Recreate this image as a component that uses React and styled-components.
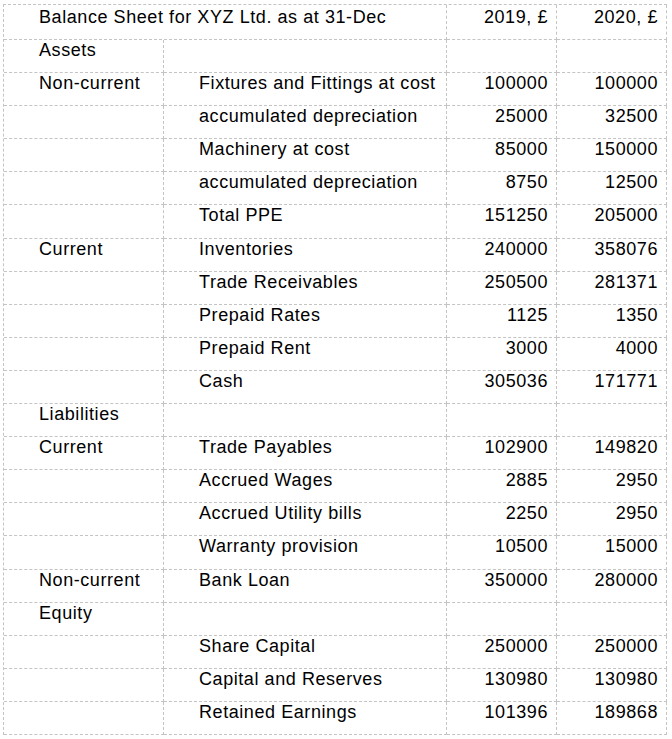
import React from "react";
import styled, { createGlobalStyle } from "styled-components";

const GlobalStyle = createGlobalStyle`
  html, body {
    margin: 0;
    padding: 0;
    background: #ffffff;
  }
  body {
    font-family: "Liberation Sans", Arial, sans-serif;
    color: #000000;
  }
`;

const LINE = "1px dashed #c4c4c4";

const Sheet = styled.div`
  display: grid;
  grid-template-columns: 160px 283px 110px 110px;
  grid-template-rows: 35px;
  grid-auto-rows: 33.1px;
  margin: 4px 0 0 3px;
  width: max-content;
  border-top: ${LINE};
  border-left: ${LINE};
`;

const Cell = styled.div`
  box-sizing: border-box;
  border-right: ${LINE};
  border-bottom: ${LINE};
  font-size: 18px;
  line-height: 20px;
  letter-spacing: 0.57px;
  padding: ${(p) => (p.$title ? "2px" : "0")} ${(p) => (p.$num ? "8px" : "0")} 0
    ${(p) => (p.$num ? "0" : "35px")};
  text-align: ${(p) => (p.$num ? "right" : "left")};
  grid-column: ${(p) => (p.$span ? `span ${p.$span}` : "auto")};
  white-space: nowrap;
`;

const rows = [
  ["Assets", "", "", ""],
  ["Non-current", "Fixtures and Fittings at cost", "100000", "100000"],
  ["", "accumulated depreciation", "25000", "32500"],
  ["", "Machinery at cost", "85000", "150000"],
  ["", "accumulated depreciation", "8750", "12500"],
  ["", "Total PPE", "151250", "205000"],
  ["Current", "Inventories", "240000", "358076"],
  ["", "Trade Receivables", "250500", "281371"],
  ["", "Prepaid Rates", "1125", "1350"],
  ["", "Prepaid Rent", "3000", "4000"],
  ["", "Cash", "305036", "171771"],
  ["Liabilities", "", "", ""],
  ["Current", "Trade Payables", "102900", "149820"],
  ["", "Accrued Wages", "2885", "2950"],
  ["", "Accrued Utility bills", "2250", "2950"],
  ["", "Warranty provision", "10500", "15000"],
  ["Non-current", "Bank Loan", "350000", "280000"],
  ["Equity", "", "", ""],
  ["", "Share Capital", "250000", "250000"],
  ["", "Capital and Reserves", "130980", "130980"],
  ["", "Retained Earnings", "101396", "189868"],
];

const App = () => {
  return (
    <>
      <GlobalStyle />
      <Sheet>
        <Cell $title $span={2}>
          Balance Sheet for XYZ Ltd. as at 31-Dec
        </Cell>
        <Cell $title $num>
          2019, £
        </Cell>
        <Cell $title $num>
          2020, £
        </Cell>
        {rows.map((row, index) => (
          <React.Fragment key={index}>
            <Cell>{row[0]}</Cell>
            <Cell>{row[1]}</Cell>
            <Cell $num>{row[2]}</Cell>
            <Cell $num>{row[3]}</Cell>
          </React.Fragment>
        ))}
      </Sheet>
    </>
  );
};

export default App;
